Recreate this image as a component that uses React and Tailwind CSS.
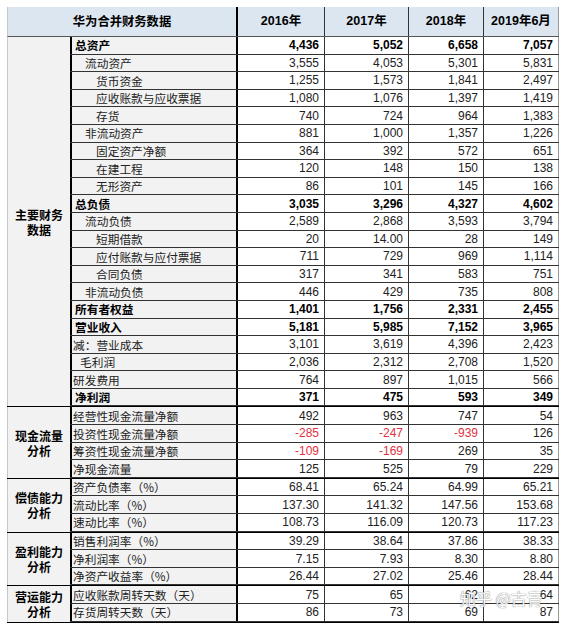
import React from "react";

const groups = [
  {
    title: ["主要财务", "数据"],
    rows: [
      { l: "总资产", ind: "b", v: ["4,436", "5,052", "6,658", "7,057"] },
      { l: "流动资产", ind: 1, v: ["3,555", "4,053", "5,301", "5,831"] },
      { l: "货币资金", ind: 2, v: ["1,255", "1,573", "1,841", "2,497"] },
      { l: "应收账款与应收票据", ind: 2, v: ["1,080", "1,076", "1,397", "1,419"] },
      { l: "存货", ind: 2, v: ["740", "724", "964", "1,383"] },
      { l: "非流动资产", ind: 1, v: ["881", "1,000", "1,357", "1,226"] },
      { l: "固定资产净额", ind: 2, v: ["364", "392", "572", "651"] },
      { l: "在建工程", ind: 2, v: ["120", "148", "150", "138"] },
      { l: "无形资产", ind: 2, v: ["86", "101", "145", "166"] },
      { l: "总负债", ind: "b", v: ["3,035", "3,296", "4,327", "4,602"] },
      { l: "流动负债", ind: 1, v: ["2,589", "2,868", "3,593", "3,794"] },
      { l: "短期借款", ind: 2, v: ["20", "14.00", "28", "149"] },
      { l: "应付账款与应付票据", ind: 2, v: ["711", "729", "969", "1,114"] },
      { l: "合同负债", ind: 2, v: ["317", "341", "583", "751"] },
      { l: "非流动负债", ind: 1, v: ["446", "429", "735", "808"] },
      { l: "所有者权益", ind: "b", v: ["1,401", "1,756", "2,331", "2,455"] },
      { l: "营业收入", ind: "b", v: ["5,181", "5,985", "7,152", "3,965"] },
      { l: "减：营业成本", ind: 0, v: ["3,101", "3,619", "4,396", "2,423"] },
      { l: "毛利润", ind: "m", v: ["2,036", "2,312", "2,708", "1,520"] },
      { l: "研发费用", ind: 0, v: ["764", "897", "1,015", "566"] },
      { l: "净利润", ind: "b", v: ["371", "475", "593", "349"] },
    ],
  },
  {
    title: ["现金流量", "分析"],
    rows: [
      { l: "经营性现金流量净额", ind: 0, v: ["492", "963", "747", "54"] },
      { l: "投资性现金流量净额", ind: 0, v: ["-285", "-247", "-939", "126"] },
      { l: "筹资性现金流量净额", ind: 0, v: ["-109", "-169", "269", "35"] },
      { l: "净现金流量", ind: 0, v: ["125", "525", "79", "229"] },
    ],
  },
  {
    title: ["偿债能力", "分析"],
    rows: [
      { l: "资产负债率（%）", ind: 0, v: ["68.41", "65.24", "64.99", "65.21"] },
      { l: "流动比率（%）", ind: 0, v: ["137.30", "141.32", "147.56", "153.68"] },
      { l: "速动比率（%）", ind: 0, v: ["108.73", "116.09", "120.73", "117.23"] },
    ],
  },
  {
    title: ["盈利能力", "分析"],
    rows: [
      { l: "销售利润率（%）", ind: 0, v: ["39.29", "38.64", "37.86", "38.33"] },
      { l: "净利润率（%）", ind: 0, v: ["7.15", "7.93", "8.30", "8.80"] },
      { l: "净资产收益率（%）", ind: 0, v: ["26.44", "27.02", "25.46", "28.44"] },
    ],
  },
  {
    title: ["营运能力", "分析"],
    rows: [
      { l: "应收账款周转天数（天）", ind: 0, v: ["75", "65", "62", "64"] },
      { l: "存货周转天数（天）", ind: 0, v: ["86", "73", "69", "87"] },
    ],
  },
];

const colCls = [
  "w-[88px] border-l-2 border-black",
  "w-[84px] border-l border-[#333]",
  "w-[75px] border-l border-[#333]",
  "w-[76px] border-l border-[#333] border-r border-r-[#999]",
];

const indCls = {
  b: "pl-[3px] font-bold text-black",
  0: "pl-[1px]",
  m: "pl-[8px]",
  1: "pl-[13px]",
  2: "pl-[24px]",
};

function Row({ r }) {
  const bold = r.ind === "b";
  return (
    <div className="flex h-[17.6px] border-b border-[#333]">
      <div
        className={`w-[166px] border-l-2 border-black bg-[#f2f2f2] flex items-center text-[11.7px] leading-none text-[#222] font-['Noto_Sans_CJK_SC',sans-serif] ${indCls[r.ind]}`}
      >
        {r.l}
      </div>
      {r.v.map((val, i) => (
        <div
          key={i}
          className={`${colCls[i]} flex items-center justify-end pr-[5px] text-[12px] leading-none font-['Liberation_Sans',sans-serif] ${
            bold ? "font-bold text-black" : "text-[#222]"
          } ${val.startsWith("-") ? "text-[#e0313f]" : ""}`}
        >
          {val}
        </div>
      ))}
    </div>
  );
}

export default function App() {
  return (
    <div className="relative w-[563px] h-[628px] bg-white overflow-hidden">
      <div className="ml-[7px] pt-[7px] w-[552px]">
        <div className="flex h-[30px] bg-[#dce6f1] border-b border-[#555] border-l border-l-[#c8c8c8] font-bold text-black">
          <div className="w-[228px] flex items-center justify-center text-[12.3px] font-['Noto_Sans_CJK_SC',sans-serif]">
            华为合并财务数据
          </div>
          {["2016年", "2017年", "2018年", "2019年6月"].map((y, i) => (
            <div
              key={y}
              className={`${colCls[i]} flex items-center justify-center text-[12.5px] font-['Liberation_Sans','Noto_Sans_CJK_SC',sans-serif]`}
            >
              {y}
            </div>
          ))}
        </div>
        {groups.map((g, gi) => (
          <div key={gi} className="flex border-b border-black">
            <div className="w-[63px] shrink-0 bg-[#f2f2f2] border-l border-l-[#c8c8c8] flex flex-col items-center justify-center text-[12px] leading-[15px] font-bold text-black font-['Noto_Sans_CJK_SC',sans-serif]">
              <span>{g.title[0]}</span>
              <span>{g.title[1]}</span>
            </div>
            <div className="flex flex-col">
              {g.rows.map((r, ri) => (
                <Row key={ri} r={r} />
              ))}
            </div>
          </div>
        ))}
      </div>
      <div className="absolute left-[460px] top-[590px] text-[16px] leading-none text-white font-['Noto_Sans_CJK_SC',sans-serif] [text-shadow:0_0_1px_#777,0_0_1px_#777] opacity-90">
        知乎 @古青
      </div>
    </div>
  );
}
